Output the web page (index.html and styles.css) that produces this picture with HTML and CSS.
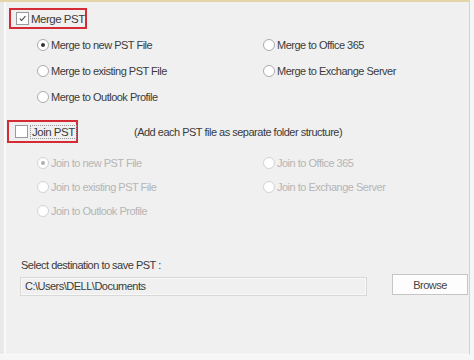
FILE: index.html
```html
<!DOCTYPE html>
<html lang="en">
<head>
    <meta charset="UTF-8">
    <meta name="viewport" content="width=device-width, initial-scale=1.0">
    <title>Merge / Join PST</title>
    <link rel="stylesheet" href="styles.css">
</head>
<body>
    <div class="window">
        <div class="head-row">
            <label class="head head-merge">
                <span class="check">
                    <svg width="9" height="9" viewBox="0 0 9 9"><polyline points="1.8,4.6 3.6,6.5 7.4,2.2" fill="none" stroke="#444" stroke-width="1.1"/></svg>
                </span>
                <span>Merge PST</span>
            </label>
        </div>

        <div class="options">
            <label class="opt"><span class="radio on"></span>Merge to new PST File</label>
            <label class="opt"><span class="radio"></span>Merge to Office 365</label>
            <label class="opt"><span class="radio"></span>Merge to existing PST File</label>
            <label class="opt"><span class="radio"></span>Merge to Exchange Server</label>
            <label class="opt"><span class="radio"></span>Merge to Outlook Profile</label>
        </div>

        <div class="head-row join-row">
            <label class="head head-join">
                <span class="check"></span>
                <span class="focus">Join PST</span>
            </label>
            <span class="note">(Add each PST file as separate folder structure)</span>
        </div>

        <div class="options options-join">
            <label class="opt"><span class="radio on"></span>Join to new PST File</label>
            <label class="opt"><span class="radio"></span>Join to Office 365</label>
            <label class="opt"><span class="radio"></span>Join to existing PST File</label>
            <label class="opt"><span class="radio"></span>Join to Exchange Server</label>
            <label class="opt"><span class="radio"></span>Join to Outlook Profile</label>
        </div>

        <div class="dest-label">Select destination to save PST :</div>
        <div class="dest-row">
            <div class="path">C:\Users\DELL\Documents</div>
            <button class="browse" type="button">Browse</button>
        </div>
    </div>
</body>
</html>
```

FILE: styles.css
```css
html {
    background: #f6f6f6;
}
body {
    margin: 0;
    font-family: "Liberation Sans", Arial, sans-serif;
    font-size: 11px;
    letter-spacing: -0.5px;
    color: #3b3b3b;
}
.window {
    width: 470px;
    height: 355px;
    box-sizing: border-box;
    padding-top: 6px;
    background: #f0f0f0;
    border-top: 2px solid #e3d5a5;
    border-right: 1px solid #d3d3d3;
    border-bottom: 1px solid #fafafa;
    box-shadow: inset 4px 0 0 #e9e9e9, inset 6px 0 0 #fafafa;
}
.head-row {
    display: flex;
    align-items: center;
    white-space: nowrap;
}
.head {
    display: flex;
    align-items: center;
    box-sizing: border-box;
    border: 2px solid #d52b35;
    white-space: nowrap;
    font-size: 11.5px;
}
.head-merge {
    margin-left: 9px;
    width: 78px;
    height: 21px;
    padding-left: 5px;
}
.check {
    display: flex;
    align-items: center;
    justify-content: center;
    flex: none;
    width: 11px;
    height: 11px;
    border: 1px solid #9a9a9a;
    background: #fff;
    margin-right: 2px;
}
.options {
    display: grid;
    grid-template-columns: 226px 1fr;
    grid-auto-rows: 26px;
    padding-left: 37px;
    margin-top: 3px;
}
.opt {
    display: flex;
    align-items: center;
    gap: 2px;
    white-space: nowrap;
}
.radio {
    display: flex;
    align-items: center;
    justify-content: center;
    flex: none;
    width: 10px;
    height: 10px;
    border: 1px solid #ababab;
    border-radius: 50%;
    background: #fff;
}
.radio.on::after {
    content: "";
    width: 4px;
    height: 4px;
    border-radius: 50%;
    background: #333;
}
.join-row {
    margin-top: 10px;
    padding-left: 7px;
}
.head-join {
    width: 71px;
    height: 23px;
    padding-left: 6px;
}
.focus {
    border: 1px dotted #9a9a9a;
    padding: 0 1px;
    line-height: 12px;
}
.note {
    margin-left: 56px;
}
.options-join {
    margin-top: 8px;
    grid-auto-rows: 24px;
    color: #b5b5b5;
}
.options-join .radio {
    border-color: #d2d2d2;
}
.options-join .radio.on::after {
    background: #b0b0b0;
}
.dest-label {
    margin-top: 35px;
    padding-left: 21px;
    line-height: 14px;
}
.dest-row {
    display: flex;
    align-items: flex-start;
    margin-top: 2px;
    padding-left: 20px;
}
.path {
    width: 347px;
    height: 19px;
    margin-top: 3px;
    box-sizing: border-box;
    padding-left: 4px;
    line-height: 17px;
    border: 1px solid #d8d8d8;
    box-shadow: inset 0 0 0 1px #f8f8f8;
}
.browse {
    margin-left: 25px;
    width: 76px;
    height: 21px;
    padding: 0;
    font: inherit;
    letter-spacing: inherit;
    color: #444;
    background: #fdfdfd;
    border: 1px solid #c6c6c6;
    border-radius: 0;
}
```
